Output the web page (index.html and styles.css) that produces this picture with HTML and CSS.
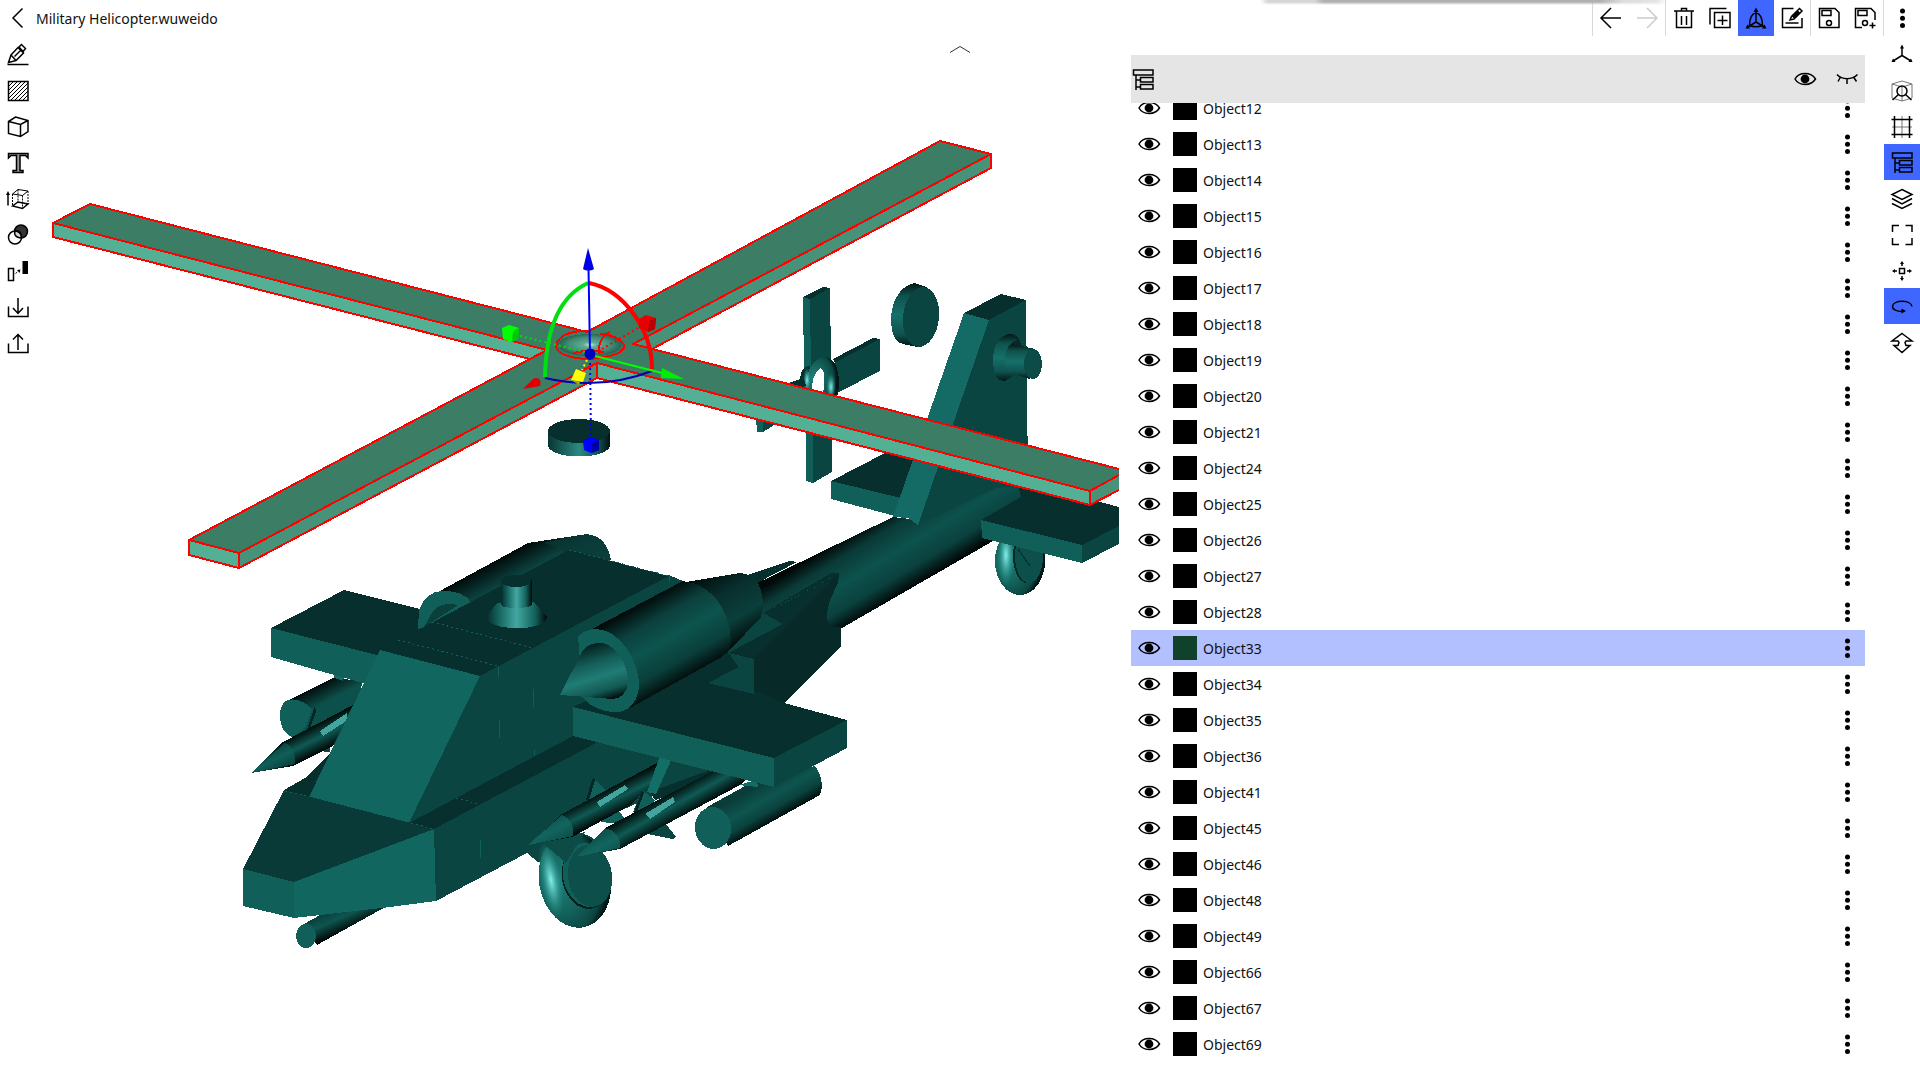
FILE: index.html
```html
<!DOCTYPE html>
<html lang="en">
<head>
<meta charset="utf-8">
<title>Military Helicopter.wuweido</title>
<link rel="stylesheet" href="styles.css">
</head>
<body>
<svg class="symbols" aria-hidden="true">
  <symbol id="eye" viewBox="0 0 36 36"><path d="M8 18C12 10.800 24 10.800 28.500 18C24 25.200 12 25.200 8 18Z"/><circle class="solid" cx="18" cy="18" r="4.400"/></symbol>
  <symbol id="dots" viewBox="0 0 36 36"><g class="solid"><circle cx="18.500" cy="11" r="2.500"/><circle cx="18.500" cy="18.200" r="2.500"/><circle cx="18.500" cy="25.500" r="2.500"/></g></symbol>
  <symbol id="tree" viewBox="0 0 36 36"><path d="M8.500 9H28V14H8.500ZM15.500 16.500H28V21H15.500ZM15.500 23.500H28V28H15.500ZM11 14V29M11 19H15.500M11 26H15.500"/></symbol>
</svg>

<header class="topbar">
  <button class="tool" aria-label="Close"><svg class="icon" viewBox="0 0 36 36"><path d="M22.500 8.500L13 18L22.500 27.500"/></svg></button>
  <h1 class="title">Military Helicopter.wuweido</h1>
  <div class="group">
    <button class="tool" aria-label="Undo"><svg class="icon" viewBox="0 0 36 36"><path d="M28 18H8M18 8L8 18L18 28"/></svg></button>
    <button class="tool faded" aria-label="Redo"><svg class="icon" viewBox="0 0 36 36"><path d="M8 18H28M18 8L28 18L18 28"/></svg></button>
  </div>
  <div class="group">
    <button class="tool" aria-label="Delete"><svg class="icon" viewBox="0 0 36 36"><path d="M8 11H28M15.500 11V8.500H20.500V11M10.500 11V27.500H25.500V11M15.500 16V25M20.500 16V25"/></svg></button>
    <button class="tool" aria-label="Duplicate"><svg class="icon" viewBox="0 0 36 36"><path d="M8 24.500V8.500H24.500M12.500 12.500H28V27.500H12.500ZM20.500 15.500V25M15.500 20.500H25.500"/></svg></button>
    <button class="tool active" aria-label="Transform"><svg class="icon" viewBox="0 0 36 36"><path d="M18 10V22L9 27.500M18 22L27 27.500M18 12.500C13 14 11.500 19 11.500 25.500C15 27 21 27 24.500 25.500C24.500 19 23 14 18 12.500"/><path class="solid" d="M18 7.500L20.500 12H15.500ZM7.500 28.500L9.500 24.500L12 28.500ZM28.500 28.500L26.500 24.500L24 28.500Z"/></svg></button>
    <button class="tool" aria-label="Edit"><svg class="icon" viewBox="0 0 36 36"><path d="M19.500 8.500H8.500V27.500H28V18M11.500 23H24.500M16 20L17.500 16.500L25.500 8.500L28 11L20 19Z"/><path class="thick" d="M19 17.500L25 11.500"/></svg></button>
  </div>
  <div class="group">
    <button class="tool" aria-label="Save"><svg class="icon" viewBox="0 0 36 36"><path d="M8.500 8.500H24L28 12.500V27.500H8.500ZM11 10.500H20V15.500H11Z"/><circle cx="18" cy="23" r="2.500"/></svg></button>
    <button class="tool" aria-label="Save as"><svg class="icon" viewBox="0 0 36 36"><path d="M15 27.500H8.500V8.500H24L28 12.500V20M11 10.500H20V15.500H11ZM25.500 22.500V28.500M22.500 25.500H28.500"/><circle cx="18" cy="23" r="2.500"/></svg></button>
  </div>
  <div class="group">
    <button class="tool" aria-label="More"><svg class="icon"><use href="#dots"/></svg></button>
  </div>
</header>

<main class="workspace">
  <nav class="rail" aria-label="Create">
    <button class="tool" aria-label="Sketch"><svg class="icon" viewBox="0 0 36 36"><path d="M7.500 28.500H28.500M8.500 26.500L11 19L18 11.500L23.500 17L16 24.500ZM11 19L16 24.500M14.500 20.500L20.500 14.500"/><path d="M19 11L21.500 8.500L25.500 12.500L23 15.500Z"/></svg></button>
    <button class="tool" aria-label="Face"><svg class="icon" viewBox="0 0 36 36"><path d="M8.500 9.500H28V28.500H8.500Z"/><path class="fine" d="M9 14L14 9M9 18L18 9M9 22L22 9M9 26L26 9M11 28L28 11M15 28L28 15M19 28L28 19M23 28L28 23"/></svg></button>
    <button class="tool" aria-label="Solid"><svg class="icon" viewBox="0 0 36 36"><path d="M15.500 9L28 12.500V23.500L20.500 28.500L8.500 25.500V13.500ZM8.500 13.500L20.500 16.500L28 12.500M20.500 16.500V28.500"/></svg></button>
    <button class="tool" aria-label="Text"><svg class="icon" viewBox="0 0 36 36"><path class="grayed" d="M8.500 9.500H28V14L25.500 11.500H20V26.500H23V28.500H13V26.500H16.500V11.500H11L8.500 14Z"/></svg></button>
    <button class="tool" aria-label="Extrude"><svg class="icon" viewBox="0 0 36 36"><path d="M8 25.500V13M12.500 26L18 22L28 24L22.500 28.500Z"/><path class="fine" d="M12.500 14L18 9.500L28 11L22.500 15.500Z"/><path class="dash" d="M12.500 14V26M18 9.500V22M28 11V24M22.500 15.500V28.500"/><path class="solid" d="M8 11L10 15H6Z"/></svg></button>
    <button class="tool" aria-label="Combine"><svg class="icon" viewBox="0 0 36 36"><circle class="shade" cx="21" cy="15.500" r="6.500"/><circle class="paper" cx="15" cy="21.500" r="6.500"/><path d="M15 15C19 14 22 17 21.500 21.500M15 15C13.500 19 17 22.500 21.500 21.500"/></svg></button>
    <button class="tool" aria-label="Mirror"><svg class="icon" viewBox="0 0 36 36"><path d="M8.500 16.500H13.500V28.500H8.500Z"/><path class="solid" d="M22.500 9H28V22H22.500ZM17 18L20.500 17.500L19.500 21Z"/><path class="dash" d="M15.500 21.500L18 19.500"/></svg></button>
    <button class="tool" aria-label="Import"><svg class="icon" viewBox="0 0 36 36"><path d="M8.500 18.500V28.500H28V18.500M18 10V25.500M13 20L18 25.500L23 20"/></svg></button>
    <button class="tool" aria-label="Export"><svg class="icon" viewBox="0 0 36 36"><path d="M8.500 19.500V28.500H28V19.500M18 26V10.500M13 15.500L18 10.500L23 15.500"/></svg></button>
  </nav>

  <section class="viewport" aria-label="Model view">
    <svg class="model" viewBox="36 36 1083 1044" preserveAspectRatio="xMinYMin meet">
      <defs>
        <linearGradient id="boom" gradientUnits="userSpaceOnUse" x1="828" y1="548" x2="868" y2="614"><stop offset="0" stop-color="#010908"/><stop offset=".2" stop-color="#0a3a37"/><stop offset=".5" stop-color="#0d524d"/><stop offset=".78" stop-color="#0a413e"/><stop offset="1" stop-color="#010908"/></linearGradient>
        <linearGradient id="engine" gradientUnits="userSpaceOnUse" x1="636" y1="605" x2="680" y2="683"><stop offset="0" stop-color="#010908"/><stop offset=".25" stop-color="#0b403d"/><stop offset=".5" stop-color="#0d544e"/><stop offset=".78" stop-color="#0a3f3b"/><stop offset="1" stop-color="#010908"/></linearGradient>
        <linearGradient id="taper" gradientUnits="userSpaceOnUse" x1="705" y1="573" x2="745" y2="640"><stop offset="0" stop-color="#020d0c"/><stop offset=".35" stop-color="#082f2d"/><stop offset=".7" stop-color="#0a3f3b"/><stop offset="1" stop-color="#020d0c"/></linearGradient>
        <linearGradient id="engine2" gradientUnits="userSpaceOnUse" x1="488" y1="564" x2="510" y2="605"><stop offset="0" stop-color="#010908"/><stop offset=".5" stop-color="#0b403d"/><stop offset="1" stop-color="#0d544e"/></linearGradient>
        <linearGradient id="pod" gradientUnits="userSpaceOnUse" x1="762" y1="783" x2="782" y2="818"><stop offset="0" stop-color="#0a3d3a"/><stop offset=".4" stop-color="#0e554f"/><stop offset=".7" stop-color="#0a423e"/><stop offset="1" stop-color="#010908"/></linearGradient>
        <linearGradient id="pod2" gradientUnits="userSpaceOnUse" x1="312" y1="687" x2="330" y2="722"><stop offset="0" stop-color="#010908"/><stop offset=".5" stop-color="#0d4f4a"/><stop offset="1" stop-color="#0d4f4a"/></linearGradient>
        <linearGradient id="missile" gradientUnits="userSpaceOnUse" x1="600" y1="792" x2="612" y2="816"><stop offset="0" stop-color="#010908"/><stop offset=".5" stop-color="#0f5a54"/><stop offset="1" stop-color="#010908"/></linearGradient>
        <linearGradient id="missile2" gradientUnits="userSpaceOnUse" x1="660" y1="797" x2="674" y2="822"><stop offset="0" stop-color="#010908"/><stop offset=".5" stop-color="#0f5a54"/><stop offset="1" stop-color="#010908"/></linearGradient>
        <linearGradient id="missile3" gradientUnits="userSpaceOnUse" x1="308" y1="728" x2="320" y2="752"><stop offset="0" stop-color="#010908"/><stop offset=".5" stop-color="#0f5a54"/><stop offset="1" stop-color="#010908"/></linearGradient>
        <linearGradient id="gun" gradientUnits="userSpaceOnUse" x1="335" y1="908" x2="345" y2="931"><stop offset="0" stop-color="#0a3d3a"/><stop offset=".45" stop-color="#0e554f"/><stop offset="1" stop-color="#010908"/></linearGradient>
        <linearGradient id="cone" gradientUnits="userSpaceOnUse" x1="585" y1="648" x2="602" y2="703"><stop offset="0" stop-color="#052523"/><stop offset=".3" stop-color="#145e58"/><stop offset=".55" stop-color="#207c75"/><stop offset=".8" stop-color="#135a54"/><stop offset="1" stop-color="#010908"/></linearGradient>
        <linearGradient id="drum"><stop offset="0" stop-color="#083532"/><stop offset=".5" stop-color="#2c8983"/><stop offset=".8" stop-color="#115650"/><stop offset="1" stop-color="#021110"/></linearGradient>
        <linearGradient id="mast"><stop offset="0" stop-color="#062a28"/><stop offset=".2" stop-color="#14625c"/><stop offset=".5" stop-color="#42a7a1"/><stop offset=".8" stop-color="#14625c"/><stop offset="1" stop-color="#010908"/></linearGradient>
        <linearGradient id="rim" x1="0" y1="0" x2="0" y2="1"><stop offset="0" stop-color="#031514"/><stop offset=".2" stop-color="#0f524d"/><stop offset=".5" stop-color="#16706a"/><stop offset=".8" stop-color="#0f524d"/><stop offset="1" stop-color="#031514"/></linearGradient>
        <radialGradient id="tyre" cx=".28" cy=".48" r=".66"><stop offset="0" stop-color="#1c827b"/><stop offset=".55" stop-color="#126059"/><stop offset=".85" stop-color="#0c4743"/><stop offset="1" stop-color="#031716"/></radialGradient>
        <radialGradient id="shine"><stop offset="0" stop-color="#84f0e9"/><stop offset=".4" stop-color="#4cb5ae" stop-opacity=".8"/><stop offset="1" stop-color="#1c827b" stop-opacity="0"/></radialGradient>
        <radialGradient id="ringtop" cx=".5" cy=".45" r=".5"><stop offset="0" stop-color="#b8f5e4"/><stop offset=".2" stop-color="#62ac97"/><stop offset=".65" stop-color="#3f8a75"/><stop offset=".9" stop-color="#2b6653"/><stop offset="1" stop-color="#3c7d66"/></radialGradient>
      </defs>

      <g shape-rendering="crispEdges">
        <!-- tail rotor -->
        <g>
          <path class="f-top" d="M803 297L823 287L830 288L810 299Z"/>
          <path class="f-front" d="M803 297L810 299L811 372H804Z"/>
          <path class="f-side" d="M810 299L830 288L831 362L811 374Z"/>
          <path class="f-top" d="M833 359L873 338L880 339L835 363Z"/>
          <path class="f-side" d="M832 364L880 339V371L837 393Z"/>
          <path class="f-top" d="M788 383L804 378L808 390L795 388Z"/>
          <path class="f-front" d="M756 418L763 420V432H757Z"/>
          <path class="f-side" d="M763 420L779 422L763 432Z"/>
          <path class="f-front" d="M806 430L813 432V483L806 481Z"/>
          <path class="f-side" d="M813 432L832 436V472L813 483Z"/>
          <path fill="#07302e" d="M800 378C801 369 805 366 810 366L815 372L809 392H800Z"/>
          <path fill="url(#tyre)" fill-rule="evenodd" d="M839 383C839 367 833 357 825 357C814 357 806 370 804 392L812 400H836C838 396 839 388 839 383ZM824 388C823 396 815 396 812 392C811 382 815 371 820 368C824 368 825 376 824 388Z"/>
          <ellipse fill="url(#shine)" cx="831" cy="387" rx="5" ry="14"/>
          <ellipse fill="url(#shine)" cx="807" cy="380" rx="4" ry="13"/>
          <path class="f-top" d="M788 383L804 379L806 386L796 386Z"/>
        </g>
        <!-- loose disc -->
        <path fill="url(#rim)" d="M927 287L914 283C900 286 891 302 891 320C891 335 896 343 903 344L917 347Z"/>
        <ellipse class="f-side" cx="921" cy="317" rx="18" ry="30" transform="rotate(6 921 317)"/>
        <!-- tail wheel -->
        <ellipse fill="url(#tyre)" cx="1020" cy="561" rx="25" ry="34"/>
        <ellipse fill="url(#shine)" cx="1006" cy="555" rx="9" ry="32"/>
        <ellipse fill="#062a28" cx="1027" cy="556" rx="14" ry="27"/>
        <ellipse fill="#0d4f4a" cx="1029" cy="556" rx="14" ry="27"/>
        <path stroke="#062a28" fill="none" d="M1018 549L1030 566"/>
        <!-- tail boom and fin -->
        <path class="f-top" d="M831 481L885 453L925 460L905 499Z"/>
        <path class="f-front" d="M831 481L905 499L895 516L831 499Z"/>
        <path class="f-side" d="M989 320L1026 300L1028 480L1019 490L960 525H915Z"/>
        <path fill="url(#boom)" d="M745 589L893 517L910 519L918 525L996 488L1019 486L1021 497L981 520L993 541L842 628L760 650Z"/>
        <path class="f-top" d="M964 313L1001 294L1026 300L989 320Z"/>
        <path fill="#146b65" d="M964 313L989 320L918 525L908 518L893 517Z"/>
        <path class="f-top" d="M981 520L1021 497L1017 480L1119 507V526L1082 545Z"/>
        <path class="f-front" d="M981 520L1082 545V563L982 538Z"/>
        <path class="f-side" d="M1082 545L1119 526V544L1082 563Z"/>
        <path fill="#062826" d="M1008 335C1016 331 1022 340 1021 350L1010 344Z"/>
        <path fill="url(#rim)" d="M1011 334C1000 334 993 345 993 361C993 375 998 382 1005 381L1015 375L1008 345L1017 340Z"/>
        <path fill="url(#rim)" d="M1012 344L1035 349L1030 379L1010 373C1002 368 1003 350 1012 344Z"/>
        <ellipse fill="#0c4b47" cx="1033" cy="364" rx="9" ry="15"/>

        <!-- far wing, pod and missile -->
        <path class="f-top" d="M271 628L344 590L440 614L400 660L377 655Z"/>
        <path fill="url(#pod2)" d="M289 700L333 678L363 681L345 745L293 738Z"/>
        <path fill="#146b65" d="M334 673L344 677L343 681L334 678Z"/>
        <path class="f-front" d="M271 628L377 655L380 688L271 657Z"/>
        <path class="f-front" d="M286 701C293 697 305 701 312 709L306 727L293 738C284 734 280 726 280 716C280 708 282 704 286 701Z"/>
        <path fill="#052624" d="M315 706L307 730L310 728L316 712Z"/>
        <path fill="#0b4642" d="M318 751L330 745V752Z"/>
        <path fill="url(#missile3)" d="M251 773L283 742L353 705L333 746L293 766Z"/>
        <path fill="#10635d" d="M251 773L285 743C292 744 296 755 295 764Z" opacity=".6"/>
        <path fill="#43a59e" d="M320 731L347 713L348 720L323 736Z"/>
        <path class="f-top" d="M284 790L305 778L330 753L321 790L309 800Z"/>

        <!-- far engine -->
        <path fill="url(#engine2)" d="M438 592L528 543L587 534C602 536 608 545 611 560L560 575L440 625Z"/>
        <path fill="#0a3835" opacity=".75" d="M543 543L587 534C602 536 608 545 611 560L569 556C560 548 553 544 543 543Z"/>
        <path class="f-front" d="M418 629L419 610C423 598 433 590 444 591C456 591 465 594 471 602L440 622Z"/>
        <path fill="#0a3f3c" d="M424 627L433 611C438 604 450 603 458 605L432 622Z"/>

        <!-- fuselage -->
        <path class="f-side" d="M480 676L669 575L683 581L754 640L784 703L713 785L653 796L527 853L436 901L409 823Z"/>
        <path class="f-top" d="M380 650L569 550L669 576L480 676Z"/>
        <path class="f-top" d="M409 823L573 736L598 742L434 829Z"/>
        <path fill="#116660" d="M380 650L480 676L409 823L309 797Z"/>
        <path fill="#0a3a38" d="M284 790L434 829L294 882L243 869Z"/>
        <path class="f-front" d="M243 869L294 882V918L243 906Z"/>
        <path fill="url(#gun)" d="M302 925L322 914L389 905L317 945Z"/>
        <path fill="#116660" d="M294 882L434 829L436 901L390 907L294 918Z"/>
        <ellipse class="f-front" cx="306" cy="936" rx="10" ry="12"/>
        <g class="seam">
          <path stroke-dasharray="2 3" d="M432 622L533 648M398 640L498 666M569 550L669 576M285 791L310 797M411 823L434 829M456 798L479 804M728 653L754 659"/>
          <path d="M498.500 667V677M533.500 689V707M499.500 720V738M534.500 750V755M480.500 840V858M669.500 576V582"/>
        </g>
        <path fill="url(#mast)" d="M497 603L486 617C488 632 546 632 547 617L534 602Z"/>
        <path fill="url(#mast)" d="M501 580V605C503 609 529 609 532 605V580Z"/>
        <ellipse class="f-top" cx="516" cy="581" rx="15" ry="6"/>

        <!-- rear body -->
        <path class="f-top" d="M747 575L790 561L797 562L757 583Z"/>
        <path class="f-side" d="M763 613L783 624L728 654Z"/>
        <path fill="#072a29" d="M763 613L831 573L839 573L838 583C832 596 826 606 827 619L830 627H841V646L784 703L754 694V659L728 653L783 624Z"/>
        <path class="f-top" d="M763 613L831 573L839 573L754 659L728 653L783 624Z"/>
        <path stroke="#105f59" fill="none" stroke-dasharray="1 3" d="M768 573L782 566M774 608L790 600M807 591L817 586M822 583L833 577M791 599L800 595"/>

        <!-- near wing and engine -->
        <path class="f-top" d="M573 707L720 640L754 690L784 703L847 720L774 758Z"/>
        <path class="f-side" d="M708 683L754 659V694Z"/>
        <path fill="url(#taper)" d="M680 583L740 573C748 574 755 577 758 583C763 591 764 607 761 617L730 650L700 655Z"/>
        <path fill="url(#engine)" d="M590 630L683 581C719 584 735 625 730 650L720 658L630 708Z"/>
        <path class="f-front" d="M578 636C584 631 590 629 597 629C620 630 640 662 639 687C638 700 630 712 617 712C605 713 590 707 583 698Z"/>
        <path fill="url(#cone)" d="M560 695L583 650C588 644 594 643 602 643C616 645 628 664 628 682C627 692 622 699 612 699Z"/>

        <!-- stores under the near wing -->
        <path fill="#0b4541" d="M527 853L545 842L568 862L538 862Z"/>
        <path fill="#0b4541" d="M565 838C585 826 600 840 605 858L580 865Z"/>
        <ellipse fill="url(#tyre)" cx="575" cy="880" rx="36" ry="48" transform="rotate(-10 575 880)"/>
        <ellipse fill="url(#shine)" cx="551" cy="880" rx="11" ry="40" transform="rotate(-10 551 880)"/>
        <ellipse fill="#052220" cx="586" cy="877" rx="24" ry="32" transform="rotate(-10 586 877)"/>
        <ellipse fill="#105f59" cx="587" cy="875" rx="24" ry="32" transform="rotate(-10 587 875)"/>
        <ellipse fill="#0d4f4b" cx="590" cy="876" rx="22" ry="31" transform="rotate(-8 590 876)"/>
        <path fill="#0c4b46" d="M543 843L585 832L566 863Z"/>
        <path class="f-front" d="M593 777L607 792L600 800L586 801Z"/>
        <path fill="#052624" d="M593 777L586 800L589 800L595 780Z"/>
        <path class="f-front" d="M600 822L617 808L624 818L622 824Z"/>
        <path class="f-top" d="M650 792L715 768L700 785L655 800Z"/>
        <path fill="url(#missile)" d="M562 814L657 763L664 777L640 795L629 806L572 837L528 845Z"/>
        <path fill="#146b65" opacity=".7" d="M528 845L562 815C570 818 575 826 573 836Z"/>
        <path fill="#43a59e" d="M597 802L625 785L628 789L600 807Z"/>
        <path fill="#146e68" d="M660 756L672 758L656 794L647 792Z"/>
        <path class="f-front" d="M642 790L655 800L645 812L633 812Z"/>
        <path fill="#052624" d="M642 790L634 812H637L644 793Z"/>
        <path class="f-side" d="M647 834L663 820L676 837L673 839Z"/>
        <path fill="url(#missile2)" d="M605 828L713 771L747 779L740 785L620 849L576 857Z"/>
        <path fill="#146b65" opacity=".7" d="M576 857L605 828C615 830 621 838 620 848Z"/>
        <path fill="#43a59e" d="M645 814L673 797L675 802L650 819Z"/>
        <path fill="url(#pod)" d="M707 807L747 785L815 766C821 773 824 785 820 795L728 846Z"/>
        <ellipse class="f-front" cx="713" cy="828" rx="18" ry="21" transform="rotate(-8 713 828)"/>
        <path fill="#146b65" d="M738 785L757 780L758 787Z"/>
        <path class="f-front" d="M573 707L774 758V787L573 736Z"/>
        <path class="f-side" d="M774 758L847 720V748L774 787Z"/>

        <!-- drum below the rotor -->
        <path fill="url(#drum)" d="M548 431V446C552 460 606 460 610 446V431Z"/>
        <ellipse class="f-top" cx="579" cy="431" rx="31" ry="12"/>

        <!-- main rotor -->
        <path fill="#3c7d66" d="M53 223L90 204L587 332L940 141L991 154L633 344L1119 469V475L1090 491L597 363L239 553L189 540L547 350Z"/>
        <path fill="#54b094" d="M53 223L547 350L530 359L53 237ZM597 363L1090 491V505L597 378ZM189 540L239 553V568L189 555Z"/>
        <path fill="#479379" d="M239 553L597 363V378L239 568ZM633 344L991 154V168L652 349ZM1090 491L1119 475V490L1090 505Z"/>
        <path class="edge" d="M1119 469L633 344L991 154L940 141L587 332L90 204L53 223L547 350L189 540L239 553L597 363L1090 491L1119 475M53 223V237L530 359M189 540V555L239 568L597 378L1090 505L1119 490M239 553V568M597 363V378M1090 491V505M991 154V168L652 349"/>
        <ellipse fill="url(#ringtop)" cx="590" cy="346" rx="34" ry="12"/>
        <path class="edge" d="M556 346C558 333 578 330 590 331M600 334C616 334 626 344 624 348C620 355 606 357 590 359C570 359 556 353 556 346M599 354C598 342 602 336 610 332M573 353L590 350L604 352"/>
      </g>

      <!-- transform handles -->
      <g fill="none">
        <path stroke="#00e000" stroke-width="2" stroke-dasharray="2 3" d="M520 336L585 352"/>
        <path stroke="#f00" stroke-width="2" stroke-dasharray="2 3" d="M638 328L602 349"/>
        <path stroke="#ff0" stroke-width="2" stroke-dasharray="2 3" d="M587 360L582 370"/>
        <path stroke="#00f" stroke-width="2" stroke-dasharray="2 3" d="M590 358L591 438"/>
        <path stroke="#00e010" stroke-width="4" d="M588 283C562 295 546 325 545 377"/>
        <path stroke="#f00" stroke-width="4" d="M589 283C624 290 652 330 652 369"/>
        <path stroke="#0000b4" stroke-width="2" d="M545 378Q600 391 652 371"/>
        <path stroke="#0f0" stroke-width="2" d="M595 356L662 373"/>
        <path stroke="#00f" stroke-width="2" d="M590 354L588.500 268"/>
      </g>
      <path fill="#0000e8" d="M588 248L594 269C591 271 586 271 583 269Z"/>
      <path fill="#0e0" d="M684 379L662 368L661 378Z"/>
      <path fill="#e00000" d="M523 389L533 379C538 376 542 380 540 386Z"/>
      <path fill="#0f0" d="M502 328L509 325L519 328L518 339L511 342L503 339Z"/>
      <path fill="#00c800" d="M513 331L519 328L518 339L512 342Z"/>
      <path fill="#e80000" d="M639 319L646 315L656 318L655 329L648 332L639 328Z"/>
      <path fill="#b80000" d="M649 321L656 318L655 329L648 332Z"/>
      <path fill="#ff0" d="M576 369L586 373L583 382L571 380Z"/>
      <path fill="#a9a900" d="M571 380L580 382L579 385Z"/>
      <circle fill="#0000c0" cx="590" cy="354" r="5.500"/>
      <path fill="#00f" d="M583 440L591 437L599 440V450L591 453L584 450Z"/>
      <path fill="#0000a8" d="M592 443L599 440V450L592 453Z"/>
    </svg>
  </section>

  <section class="panel" aria-label="Objects">
    <div class="panel-head">
      <button class="tool narrow" aria-label="Object tree"><svg class="icon"><use href="#tree"/></svg></button>
      <button class="tool push" aria-label="Show all"><svg class="icon"><use href="#eye"/></svg></button>
      <button class="tool" aria-label="Hide all"><svg class="icon" viewBox="0 0 36 36"><path d="M8 13.500C13 19 23 19 28.500 13.500M18 17.500V23M11.500 16L9 20.500M24.500 16L27.500 20.500"/></svg></button>
    </div>
    <ul class="list">
      <li class="row"><button class="tool" aria-label="Show Object12"><svg class="icon"><use href="#eye"/></svg></button><span class="swatch"></span><span class="name">Object12</span><button class="tool" aria-label="Options"><svg class="icon"><use href="#dots"/></svg></button></li>
      <li class="row"><button class="tool" aria-label="Show Object13"><svg class="icon"><use href="#eye"/></svg></button><span class="swatch"></span><span class="name">Object13</span><button class="tool" aria-label="Options"><svg class="icon"><use href="#dots"/></svg></button></li>
      <li class="row"><button class="tool" aria-label="Show Object14"><svg class="icon"><use href="#eye"/></svg></button><span class="swatch"></span><span class="name">Object14</span><button class="tool" aria-label="Options"><svg class="icon"><use href="#dots"/></svg></button></li>
      <li class="row"><button class="tool" aria-label="Show Object15"><svg class="icon"><use href="#eye"/></svg></button><span class="swatch"></span><span class="name">Object15</span><button class="tool" aria-label="Options"><svg class="icon"><use href="#dots"/></svg></button></li>
      <li class="row"><button class="tool" aria-label="Show Object16"><svg class="icon"><use href="#eye"/></svg></button><span class="swatch"></span><span class="name">Object16</span><button class="tool" aria-label="Options"><svg class="icon"><use href="#dots"/></svg></button></li>
      <li class="row"><button class="tool" aria-label="Show Object17"><svg class="icon"><use href="#eye"/></svg></button><span class="swatch"></span><span class="name">Object17</span><button class="tool" aria-label="Options"><svg class="icon"><use href="#dots"/></svg></button></li>
      <li class="row"><button class="tool" aria-label="Show Object18"><svg class="icon"><use href="#eye"/></svg></button><span class="swatch"></span><span class="name">Object18</span><button class="tool" aria-label="Options"><svg class="icon"><use href="#dots"/></svg></button></li>
      <li class="row"><button class="tool" aria-label="Show Object19"><svg class="icon"><use href="#eye"/></svg></button><span class="swatch"></span><span class="name">Object19</span><button class="tool" aria-label="Options"><svg class="icon"><use href="#dots"/></svg></button></li>
      <li class="row"><button class="tool" aria-label="Show Object20"><svg class="icon"><use href="#eye"/></svg></button><span class="swatch"></span><span class="name">Object20</span><button class="tool" aria-label="Options"><svg class="icon"><use href="#dots"/></svg></button></li>
      <li class="row"><button class="tool" aria-label="Show Object21"><svg class="icon"><use href="#eye"/></svg></button><span class="swatch"></span><span class="name">Object21</span><button class="tool" aria-label="Options"><svg class="icon"><use href="#dots"/></svg></button></li>
      <li class="row"><button class="tool" aria-label="Show Object24"><svg class="icon"><use href="#eye"/></svg></button><span class="swatch"></span><span class="name">Object24</span><button class="tool" aria-label="Options"><svg class="icon"><use href="#dots"/></svg></button></li>
      <li class="row"><button class="tool" aria-label="Show Object25"><svg class="icon"><use href="#eye"/></svg></button><span class="swatch"></span><span class="name">Object25</span><button class="tool" aria-label="Options"><svg class="icon"><use href="#dots"/></svg></button></li>
      <li class="row"><button class="tool" aria-label="Show Object26"><svg class="icon"><use href="#eye"/></svg></button><span class="swatch"></span><span class="name">Object26</span><button class="tool" aria-label="Options"><svg class="icon"><use href="#dots"/></svg></button></li>
      <li class="row"><button class="tool" aria-label="Show Object27"><svg class="icon"><use href="#eye"/></svg></button><span class="swatch"></span><span class="name">Object27</span><button class="tool" aria-label="Options"><svg class="icon"><use href="#dots"/></svg></button></li>
      <li class="row"><button class="tool" aria-label="Show Object28"><svg class="icon"><use href="#eye"/></svg></button><span class="swatch"></span><span class="name">Object28</span><button class="tool" aria-label="Options"><svg class="icon"><use href="#dots"/></svg></button></li>
      <li class="row selected"><button class="tool" aria-label="Show Object33"><svg class="icon"><use href="#eye"/></svg></button><span class="swatch green"></span><span class="name">Object33</span><button class="tool" aria-label="Options"><svg class="icon"><use href="#dots"/></svg></button></li>
      <li class="row"><button class="tool" aria-label="Show Object34"><svg class="icon"><use href="#eye"/></svg></button><span class="swatch"></span><span class="name">Object34</span><button class="tool" aria-label="Options"><svg class="icon"><use href="#dots"/></svg></button></li>
      <li class="row"><button class="tool" aria-label="Show Object35"><svg class="icon"><use href="#eye"/></svg></button><span class="swatch"></span><span class="name">Object35</span><button class="tool" aria-label="Options"><svg class="icon"><use href="#dots"/></svg></button></li>
      <li class="row"><button class="tool" aria-label="Show Object36"><svg class="icon"><use href="#eye"/></svg></button><span class="swatch"></span><span class="name">Object36</span><button class="tool" aria-label="Options"><svg class="icon"><use href="#dots"/></svg></button></li>
      <li class="row"><button class="tool" aria-label="Show Object41"><svg class="icon"><use href="#eye"/></svg></button><span class="swatch"></span><span class="name">Object41</span><button class="tool" aria-label="Options"><svg class="icon"><use href="#dots"/></svg></button></li>
      <li class="row"><button class="tool" aria-label="Show Object45"><svg class="icon"><use href="#eye"/></svg></button><span class="swatch"></span><span class="name">Object45</span><button class="tool" aria-label="Options"><svg class="icon"><use href="#dots"/></svg></button></li>
      <li class="row"><button class="tool" aria-label="Show Object46"><svg class="icon"><use href="#eye"/></svg></button><span class="swatch"></span><span class="name">Object46</span><button class="tool" aria-label="Options"><svg class="icon"><use href="#dots"/></svg></button></li>
      <li class="row"><button class="tool" aria-label="Show Object48"><svg class="icon"><use href="#eye"/></svg></button><span class="swatch"></span><span class="name">Object48</span><button class="tool" aria-label="Options"><svg class="icon"><use href="#dots"/></svg></button></li>
      <li class="row"><button class="tool" aria-label="Show Object49"><svg class="icon"><use href="#eye"/></svg></button><span class="swatch"></span><span class="name">Object49</span><button class="tool" aria-label="Options"><svg class="icon"><use href="#dots"/></svg></button></li>
      <li class="row"><button class="tool" aria-label="Show Object66"><svg class="icon"><use href="#eye"/></svg></button><span class="swatch"></span><span class="name">Object66</span><button class="tool" aria-label="Options"><svg class="icon"><use href="#dots"/></svg></button></li>
      <li class="row"><button class="tool" aria-label="Show Object67"><svg class="icon"><use href="#eye"/></svg></button><span class="swatch"></span><span class="name">Object67</span><button class="tool" aria-label="Options"><svg class="icon"><use href="#dots"/></svg></button></li>
      <li class="row"><button class="tool" aria-label="Show Object69"><svg class="icon"><use href="#eye"/></svg></button><span class="swatch"></span><span class="name">Object69</span><button class="tool" aria-label="Options"><svg class="icon"><use href="#dots"/></svg></button></li>
    </ul>
  </section>

  <nav class="rail" aria-label="View">
    <button class="tool" aria-label="Axes"><svg class="icon" viewBox="0 0 36 36"><path d="M18 11V19.500L9 25M18 19.500L27 25"/><path class="solid" d="M18 8.500L20 12.500H16ZM7.500 26L9 22.500L11.500 26ZM28.500 26L27 22.500L24.500 26Z"/></svg></button>
    <button class="tool" aria-label="Inspect"><svg class="icon" viewBox="0 0 36 36"><path class="soft" d="M18 9L28 12V26L18 29L8 26V12ZM8 12L18 15L28 12M18 15V29"/><circle cx="18" cy="19" r="5"/><path d="M14.500 22.500L8.500 28M21.500 22.500L27.500 28"/></svg></button>
    <button class="tool" aria-label="Grid"><svg class="icon" viewBox="0 0 36 36"><path class="soft" d="M18 8V30M8 19H28"/><path d="M10.500 8V30M25.500 8V30M7.500 11.500H28.500M7.500 26.500H28.500"/></svg></button>
    <button class="tool active" aria-label="Object tree"><svg class="icon"><use href="#tree"/></svg></button>
    <button class="tool" aria-label="Layers"><svg class="icon" viewBox="0 0 36 36"><path d="M18 9.500L28 14.500L18 19.500L8 14.500ZM8 18.500L18 24L28 18.500M8 23.500L18 28.500L28 23.500"/></svg></button>
    <button class="tool" aria-label="Fit"><svg class="icon" viewBox="0 0 36 36"><path d="M8.500 16V9.500H15M21.500 9.500H28V16M28 22V28.500H21.500M15 28.500H8.500V22"/></svg></button>
    <button class="tool" aria-label="Pan"><svg class="icon" viewBox="0 0 36 36"><path d="M15.500 16.500H20.500V21.500H15.500ZM18 11V14M18 24V27M10 19H13M23 19H26"/><path class="solid" d="M18 9L20 12H16ZM18 29L20 26H16ZM8 19L11 17V21ZM28 19L25 17V21Z"/></svg></button>
    <button class="tool active" aria-label="Orbit"><svg class="icon" viewBox="0 0 36 36"><path d="M28 18.500C27 11.500 9 11.500 8.500 18.500C8.500 21.500 13 23.500 18 23.500"/><path class="solid" d="M22 23L17.500 20.500V25.500Z"/></svg></button>
    <button class="tool" aria-label="Zoom"><svg class="icon" viewBox="0 0 36 36"><path d="M18 9.500L28 17H22L21 18.500L22 21.500H26L18 28.500L10 21.500H14L15 18.500L14 17H8Z"/></svg></button>
  </nav>
</main>

<button class="collapse" aria-label="Collapse"><svg viewBox="0 0 22 10"><path d="M1 8.500L11 2.500L21 8.500"/></svg></button>
<div class="edge-shadow"></div>
</body>
</html>
```
FILE: styles.css
```css
* { box-sizing: border-box; }

body {
  margin: 0;
  height: 100vh;
  display: flex;
  flex-direction: column;
  position: relative;
  overflow: hidden;
  background: #fff;
  color: #111;
  font: 14px/20px "Noto Sans", "Open Sans", sans-serif;
}

.symbols { position: absolute; width: 0; height: 0; }

.tool {
  flex: none;
  width: 36px;
  height: 36px;
  padding: 0;
  border: 0;
  background: none;
  color: #000;
}
.tool.active { background: #3f66ff; }
.tool.faded { color: #ccc; }
.tool.narrow { width: 24px; }

.icon {
  display: block;
  width: 36px;
  height: 36px;
  fill: none;
  stroke: currentColor;
  stroke-width: 1.5;
}
.narrow .icon { margin-left: -6px; }
.solid { fill: currentColor; stroke: none; }
.thick { stroke-width: 3; }
.fine { stroke-width: 1; }
.soft { stroke: #777; stroke-width: 1; }
.dash { stroke-dasharray: 2 1; stroke-width: 1; }
.grayed { fill: #999; }
.shade { fill: #333; }
.paper { fill: #fff; fill-opacity: .8; }

.topbar { flex: none; display: flex; align-items: center; height: 36px; }
.title { flex: 1; margin: 0; padding-top: 2px; font-size: 14px; font-weight: 400; line-height: 20px; }
.group { display: flex; border-left: 1px solid #d9d9d9; }

.workspace {
  flex: 1;
  min-height: 0;
  display: grid;
  grid-template-columns: 36px minmax(0, 1083fr) minmax(0, 765fr) 36px;
}
.rail { display: flex; flex-direction: column; }
.viewport { min-height: 0; overflow: hidden; }
.model { display: block; width: 100%; height: 100%; }

.f-top { fill: #072f2e; }
.f-front { fill: #105f59; }
.f-side { fill: #0a4542; }
.edge { fill: none; stroke: #f00; stroke-width: 2; stroke-linejoin: round; }
.seam { fill: none; stroke: #105f59; stroke-width: 1; }

.panel {
  margin: 19px 19px 0 12px;
  min-height: 0;
  display: flex;
  flex-direction: column;
  overflow: hidden;
}
.panel-head {
  flex: none;
  display: flex;
  align-items: center;
  gap: 6px;
  height: 48px;
  background: #e5e5e5;
  z-index: 1;
}
.push { margin-left: auto; }
.list { margin: -13px 0 0; padding: 0; list-style: none; }
.row { display: flex; align-items: center; height: 36px; }
.row.selected { background: #b2c0ff; }
.swatch { width: 24px; height: 24px; margin: 0 6px; background: #000; }
.swatch.green { background: #10412b; }
.name { flex: 1; padding-top: 2px; }

.collapse {
  position: absolute;
  top: 44px;
  left: 50%;
  width: 22px;
  height: 10px;
  margin-left: -11px;
  padding: 0;
  border: 0;
  background: none;
}
.collapse svg { display: block; width: 22px; height: 10px; fill: none; stroke: #333; }

/* shadow cast by the window above the page */
.edge-shadow {
  position: absolute;
  top: 0;
  right: 252px;
  width: 408px;
  height: 5px;
  background: linear-gradient(90deg, transparent, #d6d6d6 8px, #d6d6d6 54px, #b0b0b0 64px, #b0b0b0 340px, #dcdcdc 362px, #e4e4e4 396px, transparent);
  -webkit-mask-image: linear-gradient(#000 40%, transparent);
  mask-image: linear-gradient(#000 40%, transparent);
}
```
